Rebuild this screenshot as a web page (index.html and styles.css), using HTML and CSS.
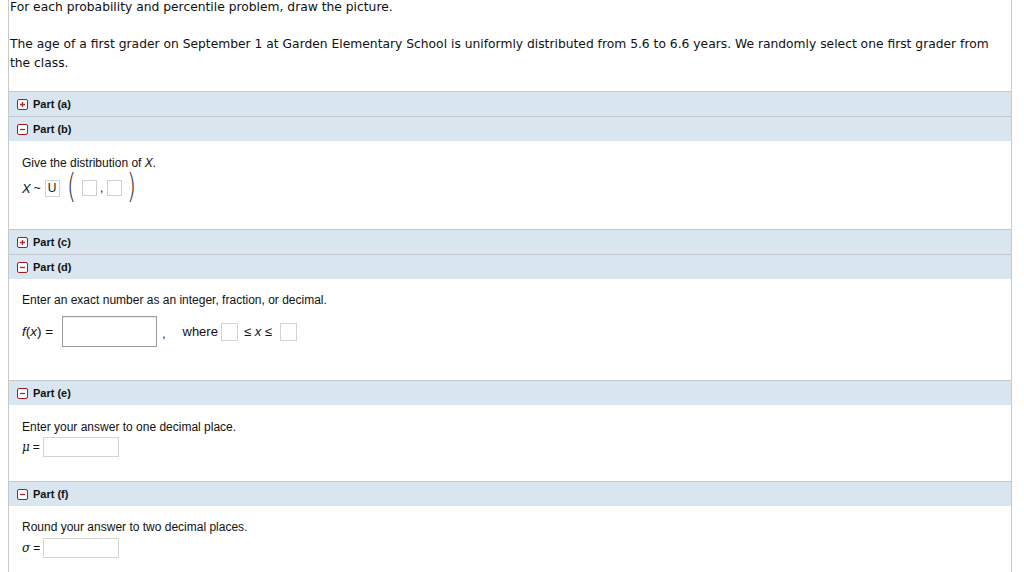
FILE: index.html
```html
<!DOCTYPE html>
<html lang="en">
<head>
  <meta charset="UTF-8" />
  <title>Uniform distribution problem</title>
  <link rel="stylesheet" href="styles.css">
</head>
<body>
<main class="problem">
  <p class="intro first">For each probability and percentile problem, draw the picture.</p>
  <p class="intro">The age of a first grader on September 1 at Garden Elementary School is uniformly distributed from 5.6 to 6.6 years. We randomly select one first grader from the class.</p>

  <!-- Part (a) -->
  <div class="part-head">
    <svg class="toggle" width="11" height="11" viewBox="0 0 11 11"><rect x="0.5" y="0.5" width="10" height="10" rx="1.5" fill="#fff" stroke="#9a1f24"/><path d="M3 5.5h5M5.5 3v5" stroke="#b5262c" stroke-width="1.3"/></svg>
    <span>Part (a)</span>
  </div>

  <!-- Part (b) -->
  <div class="part-head">
    <svg class="toggle" width="11" height="11" viewBox="0 0 11 11"><rect x="0.5" y="0.5" width="10" height="10" rx="1.5" fill="#fff" stroke="#9a1f24"/><path d="M3 5.5h5" stroke="#b5262c" stroke-width="1.3"/></svg>
    <span>Part (b)</span>
  </div>
  <div class="part-body body-b">
    <div class="prompt">Give the distribution of <i>X</i>.</div>
    <div class="answer-row dist-row">
      <i class="var">X</i><span class="tilde">~</span>
      <span class="box-u">U</span>
      <span class="paren">(</span>
      <span class="mini"></span><span class="comma">,</span><span class="mini"></span>
      <span class="paren">)</span>
    </div>
  </div>

  <!-- Part (c) -->
  <div class="part-head">
    <svg class="toggle" width="11" height="11" viewBox="0 0 11 11"><rect x="0.5" y="0.5" width="10" height="10" rx="1.5" fill="#fff" stroke="#9a1f24"/><path d="M3 5.5h5M5.5 3v5" stroke="#b5262c" stroke-width="1.3"/></svg>
    <span>Part (c)</span>
  </div>

  <!-- Part (d) -->
  <div class="part-head">
    <svg class="toggle" width="11" height="11" viewBox="0 0 11 11"><rect x="0.5" y="0.5" width="10" height="10" rx="1.5" fill="#fff" stroke="#9a1f24"/><path d="M3 5.5h5" stroke="#b5262c" stroke-width="1.3"/></svg>
    <span>Part (d)</span>
  </div>
  <div class="part-body body-d">
    <div class="prompt">Enter an exact number as an integer, fraction, or decimal.</div>
    <div class="answer-row pdf-row">
      <span class="fx"><i>f</i>(<i>x</i>) =</span>
      <span class="big-input"></span>
      <span class="pdf-comma">,</span>
      <span class="where">where</span>
      <span class="small-input"></span>
      <span class="ineq">≤ <i>x</i> ≤</span>
      <span class="small-input"></span>
    </div>
  </div>

  <!-- Part (e) -->
  <div class="part-head">
    <svg class="toggle" width="11" height="11" viewBox="0 0 11 11"><rect x="0.5" y="0.5" width="10" height="10" rx="1.5" fill="#fff" stroke="#9a1f24"/><path d="M3 5.5h5" stroke="#b5262c" stroke-width="1.3"/></svg>
    <span>Part (e)</span>
  </div>
  <div class="part-body body-e">
    <div class="prompt">Enter your answer to one decimal place.</div>
    <div class="answer-row short-row">
      <i class="greek">μ</i><span class="eq">=</span><span class="text-input"></span>
    </div>
  </div>

  <!-- Part (f) -->
  <div class="part-head">
    <svg class="toggle" width="11" height="11" viewBox="0 0 11 11"><rect x="0.5" y="0.5" width="10" height="10" rx="1.5" fill="#fff" stroke="#9a1f24"/><path d="M3 5.5h5" stroke="#b5262c" stroke-width="1.3"/></svg>
    <span>Part (f)</span>
  </div>
  <div class="part-body body-f">
    <div class="prompt">Round your answer to two decimal places.</div>
    <div class="answer-row short-row">
      <i class="greek">σ</i><span class="eq">=</span><span class="text-input"></span>
    </div>
  </div>
</main>
</body>
</html>
```

FILE: styles.css
```css
* { box-sizing: border-box; margin: 0; padding: 0; }
body {
  background: #fff;
  font-family: "Liberation Sans", Arial, sans-serif;
  color: #111;
  overflow: hidden;
}
.problem {
  margin-left: 8px;
  width: 1004px;
  min-height: 572px;
  border-left: 1px solid #c9c9c9;
  border-right: 1px solid #c9c9c9;
}
.intro {
  font-family: "DejaVu Sans", Verdana, sans-serif;
  font-size: 12.3px;
  line-height: 19px;
  color: #111;
  padding-left: 1px;
  padding-right: 10px;
  margin-top: 20px;
  margin-bottom: 18px;
}
.intro.first { line-height: 15px; margin-top: 0; margin-bottom: 0; }

.part-head {
  height: 25px;
  border-top: 1px solid #c4c8cc;
  background: #d9e5ef;
  display: flex; align-items: center; gap: 5px;
  padding-left: 8px;
  font-size: 11px; font-weight: bold; color: #111;
}
.toggle { display: block; flex: none; }

.part-body { padding: 13px 13px 0; font-size: 12px; }
.prompt { line-height: 16px; }
.answer-row { display: flex; align-items: center; }

.body-b { padding-top: 14px; padding-bottom: 26px; }
.dist-row { height: 30px; margin-top: 2px; gap: 3px; }
.dist-row .var { font-size: 13px; }
.tilde { margin-right: 1px; }
.box-u {
  border: 1px solid #d4d4d4; width: 15px; height: 17px;
  display: flex; align-items: center; justify-content: center; font-size: 12px;
}
.paren {
  font-family: "DejaVu Sans", sans-serif; font-weight: 200; color: #333;
  font-size: 33px; line-height: 30px; margin: 0 1px 3px 2px; transform: scaleX(0.7);
}
.paren:last-child { margin: 0 0 3px 0; }
.mini { width: 15px; height: 16px; border: 1px solid #d0d0d0; }
.comma { width: 4px; text-align: center; }

.body-d { padding-bottom: 33px; }
.pdf-row { margin-top: 8px; height: 31px; font-size: 13px; }
.fx { font-size: 13.5px; }
.big-input { width: 95px; height: 31px; border: 1px solid #9c9c9c; margin-left: 9px; box-shadow: inset 0 1px 1px rgba(0,0,0,0.08); }
.pdf-comma { margin-left: 5px; align-self: flex-end; margin-bottom: 6px; font-size: 12px; }
.where { margin-left: 17px; font-size: 13px; }
.small-input { width: 17px; height: 18px; border: 1px solid #d4d4d4; margin-left: 3px; }
.ineq { margin: 0 5px 0 6px; font-size: 13px; }

.body-e { padding-top: 14px; padding-bottom: 24px; }
.body-f { padding-bottom: 20px; }
.short-row { margin-top: 2px; height: 20px; }
.body-f .short-row { margin-top: 3px; }
.greek { font-family: "DejaVu Serif", serif; font-size: 12px; }
.eq { margin: 0 3px 0 3px; }
.text-input { width: 76px; height: 20px; border: 1px solid #d4d4d4; }
```
